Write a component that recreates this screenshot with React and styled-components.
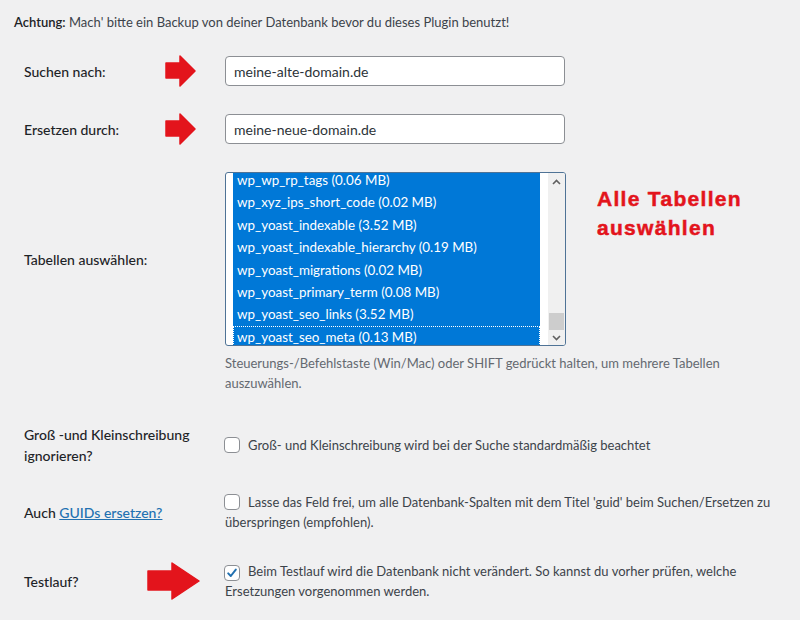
import styled, { createGlobalStyle } from "styled-components"

const GlobalStyle = createGlobalStyle`
    body {
        margin: 0;
        background: #f0f0f1;
        font-family: Lato, "Liberation Sans", sans-serif;
        color: #3c434a;
    }
`
const Page = styled.div`
    width: 800px;
    height: 620px;
    box-sizing: border-box;
    padding: 12px 15px 0 14px;
    overflow: hidden;
`
const Notice = styled.p`
    margin: 0;
    font-size: 13px;
    line-height: 20px;

    strong {
        font-weight: 600;
        color: #1d2327;
    }
`
const FormTable = styled.div`
    margin-top: 10px;
    padding-left: 10px;
    display: flex;
    flex-direction: column;
`
const Row = styled.div`
    display: flex;
    align-items: ${p => p.$align || "center"};
    padding: ${p => p.$pt}px 0 ${p => p.$pb}px;
`
const LabelCell = styled.div`
    width: 201px;
    flex-shrink: 0;
    display: flex;
    align-items: center;
    font-size: 14px;
    line-height: 21px;
    font-weight: 500;
    color: #1d2327;

    a {
        color: #2271b1;
        text-decoration: underline;
    }
`
const LabelText = styled.div`
    flex: 1;
`
const Field = styled.div`
    flex: 1;
    display: flex;
    align-items: flex-start;
    font-size: 13px;
    line-height: 20px;
    color: #3c434a;
`
const TextInput = styled.input`
    width: 340px;
    height: 30px;
    box-sizing: border-box;
    border: 1px solid #8c8f94;
    border-radius: 4px;
    padding: 0 8px;
    background: #fff;
    font-family: inherit;
    font-size: 14px;
    color: #2c3338;
    outline: none;
`
const ListBox = styled.div`
    width: 341px;
    height: 174px;
    box-sizing: border-box;
    border: 1px solid #4f7396;
    border-radius: 3px;
    background: #fff;
    display: flex;
    overflow: hidden;
`
const Options = styled.div`
    flex: 1;
    padding: 0 8px 0 7px;
    overflow: hidden;
`
const OptionsScroll = styled.div`
    margin-top: -4px;
`
const Option = styled.div`
    height: 22.4px;
    line-height: 22.4px;
    padding-left: 4px;
    background: #0078d7;
    color: #fff;
    font-size: 13.4px;
    white-space: nowrap;
    outline: ${p => (p.$focused ? "1px dotted #fff" : "none")};
    outline-offset: -1px;
`
const Scrollbar = styled.div`
    width: 17px;
    flex-shrink: 0;
    background: #f0f0f0;
    display: flex;
    flex-direction: column;
`
const ScrollButton = styled.div`
    height: ${p => p.$h}px;
    display: flex;
    align-items: center;
    justify-content: center;
`
const Track = styled.div`
    flex: 1;
`
const Thumb = styled.div`
    height: 17px;
    margin: 0 1px;
    background: #cdcdcd;
`
const Annotation = styled.div`
    margin: 12px 0 0 31px;
    font-family: "Liberation Sans", Arial, sans-serif;
    font-weight: 700;
    font-size: 21px;
    line-height: 29px;
    letter-spacing: 1.3px;
    color: #e3141c;
    -webkit-text-stroke: 0.5px #e3141c;
`
const Help = styled.p`
    margin: 7px 0 0 201px;
    font-size: 13px;
    line-height: 20px;
    color: #646970;
`
const CheckText = styled.div`
    flex: 1;
`
const Box = styled.span`
    display: inline-flex;
    align-items: center;
    justify-content: center;
    width: 16px;
    height: 16px;
    box-sizing: border-box;
    margin: 0 8px 0 -1px;
    vertical-align: -3px;
    border: 1px solid #8c8f94;
    border-radius: 4px;
    background: #fff;
`

const tables = [
    "wp_wp_rp_tags (0.06 MB)",
    "wp_xyz_ips_short_code (0.02 MB)",
    "wp_yoast_indexable (3.52 MB)",
    "wp_yoast_indexable_hierarchy (0.19 MB)",
    "wp_yoast_migrations (0.02 MB)",
    "wp_yoast_primary_term (0.08 MB)",
    "wp_yoast_seo_links (3.52 MB)",
    "wp_yoast_seo_meta (0.13 MB)",
]

function RedArrow({ big, gap }) {
    const w = big ? 53 : 31
    const h = big ? 38 : 32
    const points = big
        ? "1,9 25,9 25,1 52,19 25,37 25,28 1,28"
        : "1,8 15,8 15,1 30,16 15,31 15,23 1,23"
    return (
        <svg width={w} height={h} viewBox={`0 0 ${w} ${h}`} style={{ marginRight: gap }}>
            <polygon points={points} fill="#e3141c" stroke="#e3141c" strokeWidth="1.5" strokeLinejoin="round" />
        </svg>
    )
}

function Checkbox({ checked }) {
    return (
        <Box>
            {checked && (
                <svg width="12" height="12" viewBox="0 0 12 12">
                    <path d="M2.2 6.4 L4.8 9 L9.8 2.6" fill="none" stroke="#2271b1" strokeWidth="2" strokeLinecap="round" strokeLinejoin="round" />
                </svg>
            )}
        </Box>
    )
}

function Chevron({ down }) {
    return (
        <svg width="9" height="6" viewBox="0 0 9 6">
            <polyline points={down ? "1,1 4.5,4.5 8,1" : "1,5 4.5,1.5 8,5"} fill="none" stroke="#606060" strokeWidth="1.6" />
        </svg>
    )
}

export default function App() {
    return (
        <Page>
            <GlobalStyle />
            <Notice>
                <strong>Achtung:</strong> Mach' bitte ein Backup von deiner Datenbank bevor du dieses Plugin benutzt!
            </Notice>
            <FormTable>
                <Row $pt={13} $pb={13}>
                    <LabelCell>
                        <LabelText>Suchen nach:</LabelText>
                        <RedArrow gap={29} />
                    </LabelCell>
                    <Field>
                        <TextInput readOnly value="meine-alte-domain.de" />
                    </Field>
                </Row>
                <Row $pt={13} $pb={13}>
                    <LabelCell>
                        <LabelText>Ersetzen durch:</LabelText>
                        <RedArrow gap={29} />
                    </LabelCell>
                    <Field>
                        <TextInput readOnly value="meine-neue-domain.de" />
                    </Field>
                </Row>
                <Row $pt={14} $pb={0}>
                    <LabelCell>
                        <LabelText>Tabellen auswählen:</LabelText>
                    </LabelCell>
                    <Field>
                        <ListBox>
                            <Options>
                                <OptionsScroll>
                                    {tables.map((t, i) => (
                                        <Option key={t} $focused={i === tables.length - 1}>{t}</Option>
                                    ))}
                                </OptionsScroll>
                            </Options>
                            <Scrollbar>
                                <ScrollButton $h={17}><Chevron /></ScrollButton>
                                <Track />
                                <Thumb />
                                <ScrollButton $h={15}><Chevron down /></ScrollButton>
                            </Scrollbar>
                        </ListBox>
                        <Annotation>Alle Tabellen<br />auswählen</Annotation>
                    </Field>
                </Row>
                <Help>
                    Steuerungs-/Befehlstaste (Win/Mac) oder SHIFT gedrückt halten, um mehrere Tabellen auszuwählen.
                </Help>
                <Row $pt={31} $pb={13}>
                    <LabelCell>
                        <LabelText>Groß -und Kleinschreibung<br />ignorieren?</LabelText>
                    </LabelCell>
                    <Field>
                        <CheckText>
                            <Checkbox />Groß- und Kleinschreibung wird bei der Suche standardmäßig beachtet
                        </CheckText>
                    </Field>
                </Row>
                <Row $pt={13} $pb={15}>
                    <LabelCell>
                        <LabelText>Auch <a href="#guid">GUIDs ersetzen?</a></LabelText>
                    </LabelCell>
                    <Field>
                        <CheckText>
                            <Checkbox />Lasse das Feld frei, um alle Datenbank-Spalten mit dem Titel 'guid' beim Suchen/Ersetzen zu überspringen (empfohlen).
                        </CheckText>
                    </Field>
                </Row>
                <Row $pt={14} $pb={14}>
                    <LabelCell>
                        <LabelText>Testlauf?</LabelText>
                        <RedArrow big gap={25} />
                    </LabelCell>
                    <Field>
                        <CheckText>
                            <Checkbox checked />Beim Testlauf wird die Datenbank nicht verändert. So kannst du vorher prüfen, welche Ersetzungen vorgenommen werden.
                        </CheckText>
                    </Field>
                </Row>
            </FormTable>
        </Page>
    )
}
